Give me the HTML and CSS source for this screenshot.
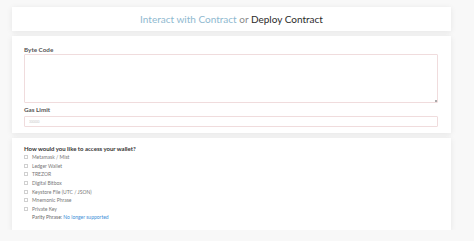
FILE: index.html
```html
<!DOCTYPE html>
<html lang="en">
<head>
    <meta charset="UTF-8">
    <meta name="viewport" content="width=device-width, initial-scale=1.0">
    <title>Contracts</title>
    <link rel="stylesheet" href="styles.css">
</head>
<body>
    <div class="page">
        <div class="card title-card">
            <h1><span class="tab-link">Interact with Contract</span> <span class="or">or</span> Deploy Contract</h1>
        </div>

        <div class="card form-card">
            <label class="field-label" for="byteCode">Byte Code</label>
            <div class="code-wrap">
                <textarea id="byteCode" class="byte-code"></textarea>
            </div>
            <label class="field-label" for="gasLimit">Gas Limit</label>
            <input type="text" id="gasLimit" class="gas-limit" placeholder="300000">
        </div>

        <div class="card wallet-card">
            <h3>How would you like to access your wallet?</h3>
            <ul class="wallet-list">
                <li><span class="radio"></span>Metamask / Mist</li>
                <li><span class="radio"></span>Ledger Wallet</li>
                <li><span class="radio"></span>TREZOR</li>
                <li><span class="radio"></span>Digital Bitbox</li>
                <li><span class="radio"></span>Keystore File (UTC / JSON)</li>
                <li><span class="radio"></span>Mnemonic Phrase</li>
                <li><span class="radio"></span>Private Key</li>
            </ul>
            <p class="parity">Parity Phrase: <a href="#">No longer supported</a></p>
        </div>
    </div>
</body>
</html>
```

FILE: styles.css
```css
body {
    margin: 0;
    background-color: #f8f8f8;
    font-family: Lato, "Open Sans", sans-serif;
    color: #333;
}

.page {
    width: 439px;
    margin-left: 12px;
    padding-top: 7px;
    display: flex;
    flex-direction: column;
    gap: 5px;
}

.card {
    background-color: #fff;
    box-shadow: 0 1px 6px rgba(0, 0, 0, 0.08);
}

.title-card {
    height: 24px;
    display: flex;
    align-items: center;
    justify-content: center;
}

.title-card h1 {
    margin: 0;
    font-size: 10px;
    font-weight: 400;
    color: #2b2b2b;
}

.tab-link {
    color: #8fb9d0;
}

.or {
    color: #8a8a8a;
}

.form-card {
    height: 97px;
    box-sizing: border-box;
    padding: 10px 13px 0 12px;
    display: flex;
    flex-direction: column;
}

.field-label {
    font-size: 6.3px;
    font-weight: 700;
    color: #555;
    line-height: 8px;
}

.code-wrap {
    position: relative;
    margin-bottom: 3px;
}

/* small resize grip */
.code-wrap::after {
    content: "";
    position: absolute;
    right: 1px;
    bottom: 1px;
    width: 2px;
    height: 2px;
    background-color: #aaa;
}

.byte-code {
    display: block;
    width: 100%;
    height: 49px;
    box-sizing: border-box;
    margin: 0;
    border: 1px solid #f0dcdd;
    border-radius: 1px;
    padding: 2px;
    font-size: 6px;
    resize: none;
}

.gas-limit {
    height: 11px;
    box-sizing: border-box;
    margin: 2px 0 0;
    border: 1px solid #f0dcdd;
    border-radius: 1px;
    padding: 0 4px;
    font-size: 3px;
    font-family: Lato, sans-serif;
}

.gas-limit::placeholder {
    color: #c8c8c8;
}

.wallet-card {
    height: 92px;
    box-sizing: border-box;
    padding: 7px 12px 0;
}

.wallet-card h3 {
    margin: 0 0 1px;
    font-size: 6px;
    font-weight: 700;
    line-height: 7px;
    color: #333;
}

.wallet-list {
    list-style: none;
    margin: 0;
    padding: 0;
}

.wallet-list li {
    display: flex;
    align-items: center;
    height: 8.6px;
    font-size: 5px;
    color: #777;
}

.radio {
    width: 2px;
    height: 2px;
    border: 1px solid #d0d0d0;
    margin-right: 4px;
}

.parity {
    margin: 0;
    padding-left: 8px;
    height: 9px;
    line-height: 9px;
    font-size: 5px;
    color: #666;
}

.parity a {
    color: #3d8fd8;
    text-decoration: none;
}
```
